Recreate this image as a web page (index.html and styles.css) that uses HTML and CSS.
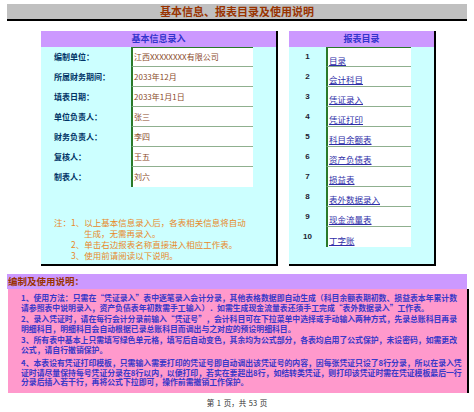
FILE: index.html
```html
<!DOCTYPE html>
<html lang="zh">
<head>
<meta charset="utf-8">
<title>基本信息、报表目录及使用说明</title>
<link rel="stylesheet" href="styles.css">
</head>
<body>
<div class="page">
  <div class="title">基本信息、报表目录及使用说明</div>

  <div class="panels">
    <div class="panel info">
      <div class="ph">基本信息录入</div>
      <div class="rows">
        <div class="row"><div class="lab">编制单位：</div><div class="val">江西XXXXXXXX有限公司</div></div>
        <div class="row"><div class="lab">所属财务期间：</div><div class="val">2033年12月</div></div>
        <div class="row"><div class="lab">填表日期：</div><div class="val">2033年1月1日</div></div>
        <div class="row"><div class="lab">单位负责人：</div><div class="val">张三</div></div>
        <div class="row"><div class="lab">财务负责人：</div><div class="val">李四</div></div>
        <div class="row"><div class="lab">复核人：</div><div class="val">王五</div></div>
        <div class="row"><div class="lab">制表人：</div><div class="val">刘六</div></div>
      </div>
      <div class="notes">
        <div class="nl">注：1、以上基本信息录入后，各表相关信息将自动</div>
        <div class="nl ind2">生成，无需再录入。</div>
        <div class="nl ind">2、单击右边报表名称直接进入相应工作表。</div>
        <div class="nl ind">3、使用前请阅读以下说明。</div>
      </div>
    </div>

    <div class="panel toc">
      <div class="ph">报表目录</div>
      <div class="rows">
        <div class="row"><div class="num">1</div><div class="lnk"><a href="#">目录</a></div></div>
        <div class="row"><div class="num">2</div><div class="lnk"><a href="#">会计科目</a></div></div>
        <div class="row"><div class="num">3</div><div class="lnk"><a href="#">凭证录入</a></div></div>
        <div class="row"><div class="num">4</div><div class="lnk"><a href="#">凭证打印</a></div></div>
        <div class="row"><div class="num">5</div><div class="lnk"><a href="#">科目余额表</a></div></div>
        <div class="row"><div class="num">6</div><div class="lnk"><a href="#">资产负债表</a></div></div>
        <div class="row"><div class="num">7</div><div class="lnk"><a href="#">损益表</a></div></div>
        <div class="row"><div class="num">8</div><div class="lnk"><a href="#">表外数据录入</a></div></div>
        <div class="row"><div class="num">9</div><div class="lnk"><a href="#">现金流量表</a></div></div>
        <div class="row"><div class="num">10</div><div class="lnk"><a href="#">丁字账</a></div></div>
      </div>
    </div>
  </div>

  <div class="uh">编制及使用说明：</div>
  <div class="ub">
    <div class="para">
      <div class="ul">1、使用方法：只需在“凭证录入”表中逐笔录入会计分录，其他表格数据即自动生成（科目余额表期初数、损益表本年累计数</div>
      <div class="ul">请参照表中说明录入，资产负债表年初数需手工输入）．如需生成现金流量表还须手工完成“表外数据录入”工作表。</div>
    </div>
    <div class="para">
      <div class="ul">2、录入凭证时，请在每行会计分录前输入“凭证号”，会计科目可在下拉菜单中选择或手动输入两种方式，先录总账科目再录</div>
      <div class="ul">明细科目，明细科目会自动根据已录总账科目而调出与之对应的预设明细科目。</div>
    </div>
    <div class="para gap">
      <div class="ul">3、所有表中基本上只需填写绿色单元格，填写后自动变色，其余均为公式部分，各表均启用了公式保护，未设密码，如需更改</div>
      <div class="ul">公式，请自行撤销保护。</div>
    </div>
    <div class="para">
      <div class="ul">4、本表设有凭证打印模板，只需输入需要打印的凭证号即自动调出该凭证号的内容，因每张凭证只设了8行分录，所以在录入凭</div>
      <div class="ul">证时请尽量保持每号凭证分录在8行以内，以便打印，若实在要超出8行，如结转类凭证，则打印该凭证时需在凭证模板最后一行</div>
      <div class="ul">分录后插入若干行，再将公式下拉即可，操作前需撤销工作保护。</div>
    </div>
  </div>

  <div class="foot">第 1 页，共 53 页</div>
</div>
</body>
</html>
```

FILE: styles.css
```css
* { box-sizing: border-box; }

body {
  margin: 0;
  background: #ffffff;
  font-family: "Noto Sans CJK SC", "Liberation Sans", sans-serif;
}

.page {
  width: 474px;
  height: 412px;
  padding-top: 4px;
  overflow: hidden;
}

.title {
  margin: 0 7px;
  height: 17px;
  background: #c0c0c0;
  border-bottom: 2px solid #000;
  text-align: center;
  font-size: 11px;
  line-height: 15px;
  font-weight: bold;
  color: #993300;
}

.panels {
  display: flex;
  gap: 11px;
  margin-top: 10px;
  padding-left: 41px;
}

.panel {
  background: #ccffff;
  border-right: 2px solid #000;
  border-bottom: 2px solid #000;
  height: 235px;
  display: flex;
  flex-direction: column;
}

.info { width: 237px; }
.toc { width: 147px; }

.ph {
  height: 16px;
  background: #cc99ff;
  text-align: center;
  font-size: 9px;
  line-height: 16px;
  font-weight: bold;
  color: #3333cc;
}

.row {
  display: flex;
  height: 20px;
}

.lab {
  width: 90px;
  padding-left: 13px;
  font-size: 8px;
  line-height: 20px;
  font-weight: bold;
  color: #003366;
  white-space: nowrap;
}

.val {
  width: 122px;
  background: #ffffff;
  border-left: 2px solid #2a7a2a;
  border-bottom: 1px solid #8fb08f;
  padding-left: 1px;
  font-size: 8px;
  line-height: 19px;
  color: #8a4a2a;
  white-space: nowrap;
}

.row:first-child .val,
.row:first-child .lnk { border-top: 1px solid #2a7a2a; line-height: 18px; }
.row:last-child .val,
.row:last-child .lnk { border-bottom: none; line-height: 20px; }

.notes {
  padding: 30px 0 0 13px;
  font-size: 8.5px;
  line-height: 11px;
  color: #e8892a;
  white-space: nowrap;
}

.ind { padding-left: 17px; }
.ind2 { padding-left: 30px; }

.num {
  width: 37px;
  text-align: center;
  font-family: "Liberation Sans", sans-serif;
  font-size: 8px;
  line-height: 20px;
  font-weight: bold;
  color: #222233;
}

.lnk {
  width: 85px;
  background: #ffffff;
  border-left: 2px solid #2a7a2a;
  border-bottom: 1px solid #8fb08f;
  padding-left: 1px;
  line-height: 19px;
  white-space: nowrap;
}

.lnk a {
  font-size: 8.5px;
  color: #2e2ea8;
  text-decoration: underline;
}

.uh {
  margin: 8px 0 0 7px;
  width: 460px;
  height: 15px;
  background: #cc99ff;
  padding-left: 1px;
  font-size: 9.5px;
  line-height: 15px;
  font-weight: bold;
  color: #993300;
}

.ub {
  margin-left: 8px;
  width: 461px;
  height: 104px;
  background: #ff99cc;
  border-right: 2px solid #000;
  padding: 4px 0 0 13px;
  font-size: 7.85px;
  line-height: 9.5px;
  font-weight: bold;
  color: #3838c8;
  overflow: hidden;
}

.para { margin-bottom: 2px; }
.para.gap { margin-bottom: 4px; }

.ul { white-space: nowrap; }

.foot {
  margin-top: 5px;
  text-align: center;
  font-size: 7.5px;
  line-height: 10px;
  color: #333333;
  word-spacing: 1px;
}
```
